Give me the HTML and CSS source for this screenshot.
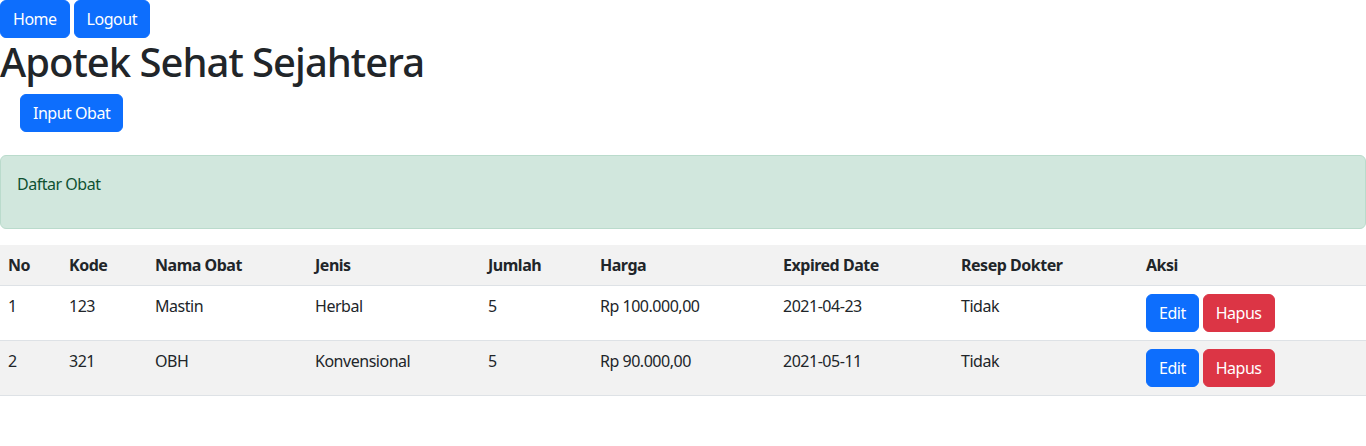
FILE: index.html
```html
<!DOCTYPE html>
<html lang="id">
<head>
<meta charset="utf-8">
<title>Apotek Sehat Sejahtera</title>
<link rel="stylesheet" href="styles.css">
</head>
<body>
<nav class="topnav">
  <a class="btn btn-primary" href="#">Home</a>
  <a class="btn btn-primary" href="#">Logout</a>
</nav>
<h1 class="title">Apotek Sehat Sejahtera</h1>
<div class="actions">
  <a class="btn btn-primary" href="#">Input Obat</a>
</div>
<div class="alert">
  <p>Daftar Obat</p>
</div>
<table class="table">
  <thead>
    <tr>
      <th class="c-no">No</th>
      <th class="c-kode">Kode</th>
      <th class="c-nama">Nama Obat</th>
      <th class="c-jenis">Jenis</th>
      <th class="c-jumlah">Jumlah</th>
      <th class="c-harga">Harga</th>
      <th class="c-exp">Expired Date</th>
      <th class="c-resep">Resep Dokter</th>
      <th class="c-aksi">Aksi</th>
    </tr>
  </thead>
  <tbody>
    <tr>
      <td>1</td>
      <td>123</td>
      <td>Mastin</td>
      <td>Herbal</td>
      <td>5</td>
      <td>Rp 100.000,00</td>
      <td>2021-04-23</td>
      <td>Tidak</td>
      <td><div class="row-actions"><a class="btn btn-primary" href="#">Edit</a><a class="btn btn-danger" href="#">Hapus</a></div></td>
    </tr>
    <tr>
      <td>2</td>
      <td>321</td>
      <td>OBH</td>
      <td>Konvensional</td>
      <td>5</td>
      <td>Rp 90.000,00</td>
      <td>2021-05-11</td>
      <td>Tidak</td>
      <td><div class="row-actions"><a class="btn btn-primary" href="#">Edit</a><a class="btn btn-danger" href="#">Hapus</a></div></td>
    </tr>
  </tbody>
</table>
</body>
</html>
```
FILE: styles.css
```css
* { box-sizing: border-box; }
body {
  margin: 0;
  font-family: "Segoe UI", "Noto Sans", sans-serif;
  font-size: 16px;
  line-height: 1.5;
  letter-spacing: -0.03em;
  color: #212529;
  background: #fff;
}
.topnav {
  display: flex;
  gap: 4px;
}
.btn {
  display: inline-block;
  padding: 6px 12px;
  font-size: 16px;
  line-height: 24px;
  border: 1px solid transparent;
  border-radius: 6px;
  text-decoration: none;
  color: #fff;
}
.btn-primary { background: #0d6efd; border-color: #0d6efd; }
.btn-danger { background: #dc3545; border-color: #dc3545; }
.title {
  margin: 0 0 8px;
  font-size: 40px;
  font-weight: 500;
  line-height: 1.2;
  letter-spacing: -0.025em;
}
.actions {
  padding-left: 20px;
  margin-bottom: 23px;
}
.alert {
  padding: 16px;
  border: 1px solid #badbcc;
  border-radius: 6px;
  background: #d1e7dd;
  color: #0f5132;
  margin-bottom: 16px;
}
.alert p { margin: 0 0 16px; }
.table {
  width: 100%;
  border-collapse: collapse;
}
.table th, .table td {
  padding: 8px;
  text-align: left;
  vertical-align: top;
  border-bottom: 1px solid #dee2e6;
}
.table th { font-weight: 700; }
.table thead tr { background: #f2f2f2; }
.table tbody tr:nth-child(even) { background: #f2f2f2; }
.c-no { width: 61px; }
.c-kode { width: 86px; }
.c-nama { width: 160px; }
.c-jenis { width: 173px; }
.c-jumlah { width: 112px; }
.c-harga { width: 183px; }
.c-exp { width: 178px; }
.c-resep { width: 185px; }
.row-actions {
  display: flex;
  gap: 4px;
}
```
